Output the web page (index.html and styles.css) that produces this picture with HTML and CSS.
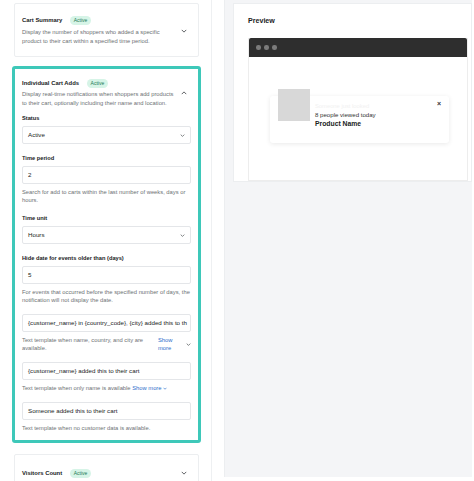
FILE: index.html
```html
<!DOCTYPE html>
<html lang="en">
<head>
  <meta charset="UTF-8">
  <meta name="viewport" content="width=device-width, initial-scale=1.0">
  <title>Cart notifications</title>
  <link rel="stylesheet" href="styles.css">
</head>
<body>
  <!-- Settings column -->
  <div class="sidebar">
    <div class="card">
      <div class="card-head">
        <div class="card-info">
          <div class="card-title">Cart Summary <span class="badge">Active</span></div>
          <p class="card-desc">Display the number of shoppers who added a specific product to their cart within a specified time period.</p>
        </div>
        <svg class="chevron" viewBox="0 0 8 5"><path d="M1 1l3 3 3-3"/></svg>
      </div>
    </div>

    <div class="card card-open">
      <div class="card-head">
        <div class="card-info">
          <div class="card-title">Individual Cart Adds <span class="badge">Active</span></div>
          <p class="card-desc">Display real-time notifications when shoppers add products to their cart, optionally including their name and location.</p>
        </div>
        <svg class="chevron chevron-up" viewBox="0 0 8 5"><path d="M1 4l3-3 3 3"/></svg>
      </div>

      <div class="field field-first">
        <div class="label">Status</div>
        <div class="control select">Active
          <svg class="select-arrow" viewBox="0 0 8 5"><path d="M1 1l3 3 3-3"/></svg>
        </div>
      </div>

      <div class="field">
        <div class="label">Time period</div>
        <div class="control">2</div>
        <p class="help">Search for add to carts within the last number of weeks, days or hours.</p>
      </div>

      <div class="field">
        <div class="label">Time unit</div>
        <div class="control select">Hours
          <svg class="select-arrow" viewBox="0 0 8 5"><path d="M1 1l3 3 3-3"/></svg>
        </div>
      </div>

      <div class="field">
        <div class="label">Hide date for events older than (days)</div>
        <div class="control">5</div>
        <p class="help">For events that occurred before the specified number of days, the notification will not display the date.</p>
      </div>

      <div class="field field-template">
        <div class="control control-clip">{customer_name} in {country_code}, {city} added this to th</div>
        <div class="help help-row">
          <span class="help-text">Text template when name, country, and city are available.</span>
          <a class="more more-wrap">Show more</a>
          <svg class="more-arrow" viewBox="0 0 8 5"><path d="M1 1l3 3 3-3"/></svg>
        </div>
      </div>

      <div class="field field-template">
        <div class="control">{customer_name} added this to their cart</div>
        <p class="help">Text template when only name is available <a class="more">Show more <svg class="inline-arrow" viewBox="0 0 8 5"><path d="M1 1l3 3 3-3"/></svg></a></p>
      </div>

      <div class="field field-template">
        <div class="control">Someone added this to their cart</div>
        <p class="help">Text template when no customer data is available.</p>
      </div>
    </div>

    <div class="card card-last">
      <div class="card-head">
        <div class="card-info">
          <div class="card-title">Visitors Count <span class="badge">Active</span></div>
        </div>
        <svg class="chevron" viewBox="0 0 8 5"><path d="M1 1l3 3 3-3"/></svg>
      </div>
    </div>
  </div>

  <!-- Preview column -->
  <div class="preview-panel">
    <div class="preview-card">
      <h2 class="preview-title">Preview</h2>
      <div class="browser">
        <div class="browser-bar">
          <span class="dot"></span><span class="dot"></span><span class="dot"></span>
        </div>
        <div class="browser-body">
          <div class="popup">
            <div class="popup-img"></div>
            <div class="popup-text">
              <div class="popup-meta">Someone just looked</div>
              <div class="popup-line">8 people viewed today</div>
              <div class="popup-name">Product Name</div>
            </div>
            <span class="popup-close">&times;</span>
          </div>
        </div>
      </div>
    </div>
  </div>
</body>
</html>
```

FILE: styles.css
```css
body {
  margin: 0;
  padding: 0;
  height: 481px;
  overflow: hidden;
  display: flex;
  background-color: #ffffff;
  font-family: 'Liberation Sans', Arial, sans-serif;
  color: #202223;
}

p {
  margin: 0;
}

/* Settings column */
.sidebar {
  width: 212px;
  box-sizing: border-box;
  padding: 3px 12px 0 14px;
  border-right: 1px solid #eef0f2;
  flex-shrink: 0;
}

.card {
  border: 1px solid #eceef0;
  border-radius: 2px;
  padding: 11px 7px 10px 7px;
  background-color: #fff;
}

.card-open {
  margin: 9px -2px 0;
  border: 3px solid #3ec8b9;
  border-radius: 3px;
  padding: 9px 7px 8px 7px;
}

.card-last {
  margin-top: 11px;
  padding-top: 13px;
}

.card-head {
  display: flex;
  align-items: center;
}

.card-info {
  flex: 1;
}

.card-title {
  font-size: 5.9px;
  font-weight: 700;
  line-height: 10px;
  display: flex;
  align-items: center;
  gap: 8px;
}

.badge {
  display: inline-block;
  font-size: 5px;
  font-weight: 400;
  line-height: 9px;
  padding: 0 3.5px;
  border-radius: 5px;
  background-color: #d6f4e7;
  color: #237a55;
}

.card-desc {
  width: 155px;
  margin-top: 3px;
  font-size: 5.8px;
  line-height: 9px;
  color: #6d7175;
}

.card-open .card-desc {
  margin-top: 2px;
  line-height: 8.5px;
}

.chevron {
  width: 6px;
  height: 4px;
  margin-right: 4px;
  fill: none;
  stroke: #5c5f62;
  stroke-width: 1.3;
}

/* Form fields */
.field {
  margin-top: 9px;
}

.field-first {
  margin-top: 6px;
}

.field-template {
  margin-top: 10px;
}

.label {
  font-size: 5.7px;
  font-weight: 700;
  line-height: 10px;
  margin-bottom: 3px;
}

.control {
  position: relative;
  height: 18px;
  box-sizing: border-box;
  border: 1px solid #e4e6e9;
  border-radius: 2px;
  padding: 0 5px;
  font-size: 6.2px;
  line-height: 16px;
  white-space: nowrap;
  overflow: hidden;
}

.control-clip {
  padding-right: 0;
}

.select-arrow {
  position: absolute;
  right: 5px;
  top: 7px;
  width: 5px;
  height: 3px;
  fill: none;
  stroke: #5c5f62;
  stroke-width: 1.3;
}

.help {
  margin-top: 4px;
  font-size: 5.8px;
  line-height: 8px;
  color: #6d7175;
}

.help-row {
  display: flex;
  align-items: center;
}

.help-text {
  width: 128px;
}

.more {
  color: #2c6ecb;
}

.more-wrap {
  width: 20px;
  margin-left: 8px;
}

.more-arrow {
  width: 5px;
  height: 3px;
  margin-left: 8px;
  fill: none;
  stroke: #5c5f62;
  stroke-width: 1.3;
}

.inline-arrow {
  width: 4px;
  height: 3px;
  fill: none;
  stroke: #2c6ecb;
  stroke-width: 1.3;
}

/* Preview column */
.preview-panel {
  width: 248px;
  height: 477px;
  margin-left: 12px;
  box-sizing: border-box;
  padding: 3px 0 0 8px;
  background-color: #f4f5f7;
  border-left: 1px solid #eceef0;
}

.preview-card {
  height: 179px;
  box-sizing: border-box;
  padding: 12px 3px 0 14px;
  background-color: #fff;
  border: 1px solid #eceef0;
}

.preview-title {
  margin: 0 0 11px;
  font-size: 7.1px;
  font-weight: 700;
  line-height: 11px;
}

.browser {
  border: 1px solid #ededed;
  border-top: none;
}

.browser-bar {
  height: 19px;
  background-color: #2e2e2e;
  border-radius: 2px 2px 0 0;
  display: flex;
  align-items: center;
  gap: 3.5px;
  padding-left: 7px;
}

.dot {
  width: 4.5px;
  height: 4.5px;
  border-radius: 50%;
  background-color: #7b7b7b;
}

.browser-body {
  height: 123px;
  box-sizing: border-box;
  padding: 39px 0 0 21px;
}

.popup {
  position: relative;
  width: 179px;
  height: 47px;
  box-sizing: border-box;
  padding: 0 8px;
  display: flex;
  align-items: flex-start;
  background-color: #fff;
  border-radius: 3px;
  box-shadow: 0 1px 5px rgba(0, 0, 0, 0.09);
}

.popup-img {
  width: 32px;
  height: 32px;
  margin-top: -7px;
  background-color: #d8d8d8;
  flex-shrink: 0;
}

.popup-text {
  margin-left: 5px;
  padding-top: 6px;
}

.popup-meta {
  font-size: 5.8px;
  line-height: 9px;
  color: #f1f1f1;
}

.popup-line {
  font-size: 6.1px;
  line-height: 8px;
  color: #333;
}

.popup-name {
  font-size: 6.8px;
  font-weight: 700;
  line-height: 10px;
  color: #202223;
}

.popup-close {
  position: absolute;
  top: 4px;
  right: 8px;
  font-size: 7px;
  font-weight: 700;
  line-height: 8px;
  color: #333;
}
```
